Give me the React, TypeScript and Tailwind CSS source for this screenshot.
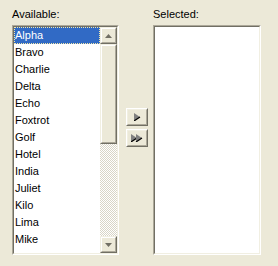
const items = [
  "Alpha",
  "Bravo",
  "Charlie",
  "Delta",
  "Echo",
  "Foxtrot",
  "Golf",
  "Hotel",
  "India",
  "Juliet",
  "Kilo",
  "Lima",
  "Mike",
];

const ScrollArrow = ({ down }: { down?: boolean }) => (
  <svg width="7" height="4" viewBox="0 0 7 4" className="block">
    <path
      d={down ? "M0,0 L7,0 L3.5,4 Z" : "M3.5,0 L7,4 L0,4 Z"}
      fill="#716f64"
    />
  </svg>
);

const ScrollButton = ({ down }: { down?: boolean }) => (
  <div className="h-[17px] w-[17px] border border-t-[#f1efe2] border-l-[#f1efe2] border-b-[#716f64] border-r-[#716f64]">
    <div className="flex h-full w-full items-center justify-center border border-t-white border-l-white border-b-[#aca899] border-r-[#aca899] bg-[#ece9d8]">
      <ScrollArrow down={down} />
    </div>
  </div>
);

const MoveButton = ({ double }: { double?: boolean }) => (
  <button className="flex h-[18px] w-[22px] items-center justify-center border border-t-white border-l-white border-b-[#716f64] border-r-[#716f64] bg-[#ece9d8]">
    <span className="flex h-full w-full items-center justify-center border border-t-[#f1efe2] border-l-[#f1efe2] border-b-[#aca899] border-r-[#aca899]">
      {double ? (
        <svg width="12" height="8" viewBox="0 0 12 8">
          <path d="M0,0 L6,4 L0,8 Z" fill="#808080" />
          <path d="M0,8 L6,4" stroke="#000" strokeWidth="1.2" />
          <path d="M5,0 L11,4 L5,8 Z" fill="#808080" />
          <path d="M5,8 L11,4" stroke="#000" strokeWidth="1.2" />
        </svg>
      ) : (
        <svg width="7" height="8" viewBox="0 0 7 8">
          <path d="M0,0 L6,4 L0,8 Z" fill="#808080" />
          <path d="M0,8 L6,4" stroke="#000" strokeWidth="1.2" />
        </svg>
      )}
    </span>
  </button>
);

const Sunken = ({ className, children }: { className: string; children?: React.ReactNode }) => (
  <div className={`border border-t-[#aca899] border-l-[#aca899] border-b-white border-r-white ${className}`}>
    <div className="h-full w-full border border-t-[#716f64] border-l-[#716f64] border-b-[#f1efe2] border-r-[#f1efe2] bg-white">
      {children}
    </div>
  </div>
);

export default function App() {
  return (
    <div className="flex h-[266px] w-[278px] bg-[#ece9d8] pl-[12px] pt-[8px] font-['Liberation_Sans',Arial,sans-serif] text-[11px] text-black">
      <div className="flex flex-col">
        <div className="h-[17px] leading-[13px]">Available:</div>
        <Sunken className="h-[230px] w-[107px]">
          <div className="flex h-full">
            <ul className="flex-1 overflow-hidden">
              {items.map((name, i) => (
                <li
                  key={name}
                  className={
                    i === 0
                      ? "h-[17px] bg-[#316ac5] pl-[1px] leading-[17px] text-white outline-1 -outline-offset-1 outline-dotted outline-[#f4e8a8]"
                      : "h-[17px] pl-[1px] leading-[17px]"
                  }
                >
                  {name}
                </li>
              ))}
            </ul>
            <div className="flex w-[17px] flex-col">
              <ScrollButton />
              <div className="flex flex-1 flex-col bg-[image:repeating-conic-gradient(#ffffff_0%_25%,#d8d5c6_0%_50%)] bg-[length:2px_2px]">
                <div className="h-[100px] border border-t-[#f1efe2] border-l-[#f1efe2] border-b-[#716f64] border-r-[#716f64]">
                  <div className="h-full border border-t-white border-l-white border-b-[#aca899] border-r-[#aca899] bg-[#ece9d8]" />
                </div>
              </div>
              <ScrollButton down />
            </div>
          </div>
        </Sunken>
      </div>

      <div className="ml-[7px] mr-[5px] flex flex-col gap-[3px] pt-[100px]">
        <MoveButton />
        <MoveButton double />
      </div>

      <div className="flex flex-col">
        <div className="h-[17px] leading-[13px]">Selected:</div>
        <Sunken className="h-[230px] w-[108px]" />
      </div>
    </div>
  );
}
